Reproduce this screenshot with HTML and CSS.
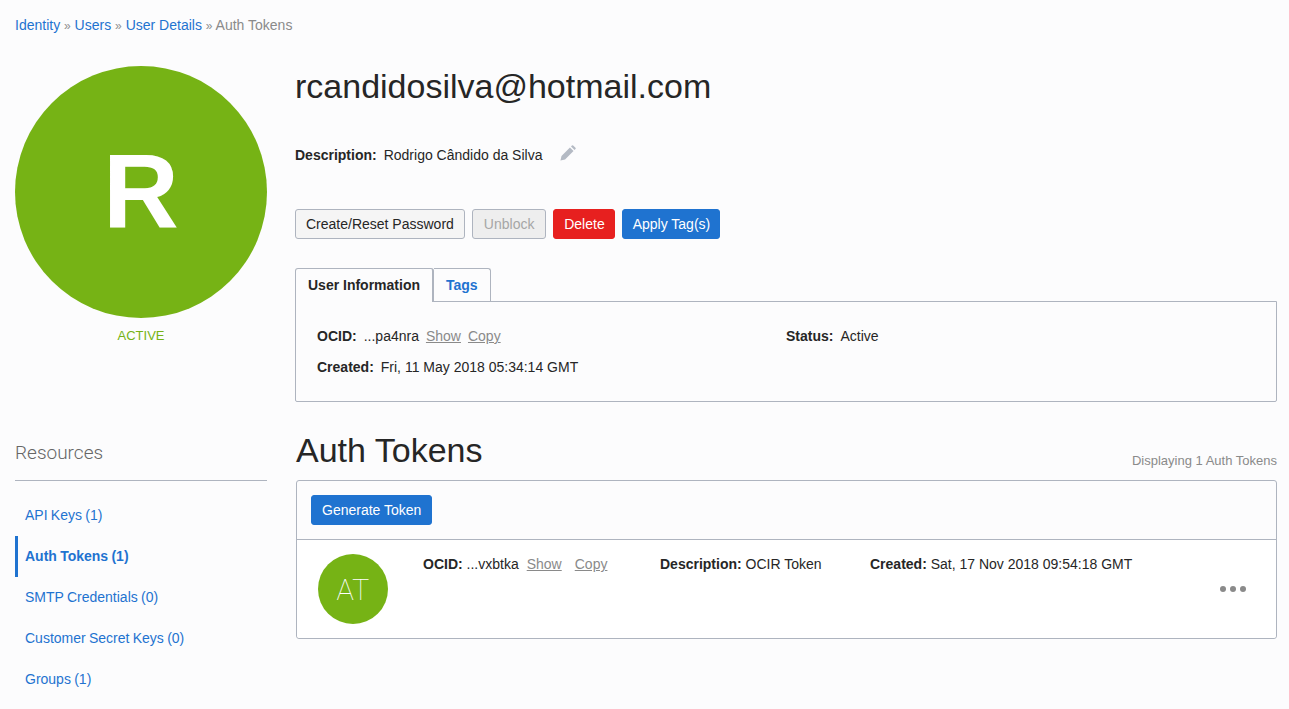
FILE: index.html
```html
<!DOCTYPE html>
<html lang="en">
<head>
<meta charset="utf-8">
<title>Auth Tokens</title>
<link rel="stylesheet" href="styles.css">
</head>
<body>
<nav class="crumbs"><a href="#">Identity</a> <span class="sep">»</span> <a href="#">Users</a> <span class="sep">»</span> <a href="#">User Details</a> <span class="sep">»</span> <span class="cur">Auth Tokens</span></nav>
<div class="top">
  <div class="identity">
    <div class="avatar">R</div>
    <div class="state">ACTIVE</div>
  </div>
  <div class="details">
    <h1>rcandidosilva@hotmail.com</h1>
    <div class="desc"><b>Description:</b><span>Rodrigo Cândido da Silva</span>
      <svg class="pencil" width="16" height="16" viewBox="0 0 18 18"><path d="M0.5 17.5l1.2-5.2L11.2 2.8l4 4L5.7 16.3z M12.4 1.6l1-1a1 1 0 0 1 1.4 0l2.6 2.6a1 1 0 0 1 0 1.4l-1 1z" fill="#b4bac4"/></svg>
    </div>
    <div class="actions">
      <button class="btn">Create/Reset Password</button>
      <button class="btn off">Unblock</button>
      <button class="btn red">Delete</button>
      <button class="btn blue tight">Apply Tag(s)</button>
    </div>
    <div class="tabs"><div class="tab on">User Information</div><div class="tab">Tags</div></div>
    <div class="info">
      <div class="info-row"><div class="info-col"><b>OCID:</b><span>...pa4nra</span><a class="lnk">Show</a><a class="lnk">Copy</a></div><div class="info-col"><b>Status:</b><span>Active</span></div></div>
      <div class="info-row"><div class="info-col"><b>Created:</b><span>Fri, 11 May 2018 05:34:14 GMT</span></div></div>
    </div>
  </div>
</div>
<div class="bottom">
  <aside class="side">
    <h3>Resources</h3>
    <ul>
      <li><a href="#">API Keys (1)</a></li>
      <li class="sel"><a href="#">Auth Tokens (1)</a></li>
      <li><a href="#">SMTP Credentials (0)</a></li>
      <li><a href="#">Customer Secret Keys (0)</a></li>
      <li><a href="#">Groups (1)</a></li>
    </ul>
  </aside>
  <section class="tokens">
    <div class="tokens-head"><h2>Auth Tokens</h2><span class="count">Displaying 1 Auth Tokens</span></div>
    <div class="panel">
      <div class="toolbar"><button class="btn blue">Generate Token</button></div>
      <div class="row">
        <div class="mini">AT</div>
        <div class="cell c1"><b>OCID:</b> ...vxbtka<a class="lnk l1">Show</a><a class="lnk l2">Copy</a></div>
        <div class="cell c2"><b>Description:</b> OCIR Token</div>
        <div class="cell c3"><b>Created:</b> Sat, 17 Nov 2018 09:54:18 GMT</div>
        <div class="dots"><i></i><i></i><i></i></div>
      </div>
    </div>
  </section>
</div>
</body>
</html>
```
FILE: styles.css
```css
* { box-sizing: border-box; }
html, body { margin: 0; height: 709px; overflow: hidden; }
body { background: #fcfcfd; color: #262626; font: 14px/20px "Liberation Sans", Arial, sans-serif; padding: 15px 12px 0 15px; }
a { color: #1f73d0; text-decoration: none; }
b { font-weight: 700; }
.crumbs { height: 20px; white-space: nowrap; }
.sep { color: #8f8f8f; font-size: 12px; }
.cur { color: #8a8a8a; }
.top { display: flex; gap: 28px; margin-top: 31px; }
.identity { width: 252px; flex: none; }
.avatar { width: 252px; height: 252px; border-radius: 50%; background: #76b315; color: #fff; font-size: 105px; font-weight: 700; display: flex; align-items: center; justify-content: center; }
.state { color: #76b315; text-align: center; margin-top: 8px; font-size: 13px; }
.details { flex: 1; min-width: 0; }
h1 { font-weight: 400; font-size: 34px; line-height: 40px; margin: 0; height: 40px; }
.desc { display: flex; align-items: center; margin-top: 39px; height: 20px; }
.desc span { margin-left: 7px; }
.pencil { margin: -4px 0 0 18px; }
.actions { display: flex; gap: 7px; margin-top: 44px; }
.btn { font: 14px/20px "Liberation Sans", Arial, sans-serif; height: 30px; padding: 0 10px; border: 1px solid #aeb4bf; border-radius: 3px; background: #f5f5f5; color: #262626; }
.off { background: #eeeeee; color: #a6a6a6; padding: 0 11px; }
.red { background: #e7201f; border-color: #e7201f; color: #fff; width: 62px; padding: 0; }
.blue { background: #1f73d0; border-color: #1f73d0; color: #fff; }
.tight { width: 98px; padding: 0; }
.tabs { display: flex; margin-top: 29px; height: 34px; position: relative; z-index: 1; }
.tab { font-weight: 700; color: #1f73d0; padding: 6px 12px 0; height: 33px; border: 1px solid #aeb4bf; border-bottom: 0; border-left: 0; border-radius: 0 3px 0 0; }
.tab.on { color: #262626; background: #fcfcfd; height: 34px; border-left: 1px solid #aeb4bf; border-radius: 3px 3px 0 0; border-right-width: 2px; }
.info { border: 1px solid #aeb4bf; height: 101px; margin-top: -1px; padding: 24px 21px 0; border-radius: 0 0 2px 2px; }
.info-row { display: flex; height: 20px; margin-bottom: 11px; }
.info-col { width: 469px; display: flex; }
.info-col span { margin-left: 7px; }
.lnk { color: #8a8a8a; text-decoration: underline; margin-left: 7px; }
.bottom { display: flex; gap: 28px; margin-top: 29px; }
.side { width: 252px; flex: none; }
.side h3 { font: 300 19px/22px Roboto, "Liberation Sans", sans-serif; color: #666666; margin: 11px 0 0; padding-bottom: 16px; border-bottom: 1px solid #aeb4bf; }
.side ul { list-style: none; margin: 14px 0 0; padding: 0; word-spacing: -0.6px; }
.side li { height: 41px; line-height: 41px; padding-left: 10px; }
.sel { border-left: 3px solid #1f73d0; padding-left: 7px !important; font-weight: 700; }
.tokens { flex: 1; min-width: 0; padding-left: 1px; }
.tokens-head { display: flex; justify-content: space-between; align-items: flex-end; height: 49px; }
h2 { font-weight: 400; font-size: 34px; line-height: 40px; margin: 0 0 10px 0; }
.count { font-size: 13px; color: #8a8a8a; margin-bottom: 9px; }
.panel { border: 1px solid #aeb4bf; border-radius: 3px; height: 159px; }
.toolbar { height: 59px; padding: 14px; border-bottom: 1px solid #aeb4bf; }
.row { position: relative; display: flex; height: 98px; background: #fff; border-radius: 0 0 3px 3px; }
.mini { width: 70px; height: 70px; border-radius: 50%; background: #76b315; color: #fff; font: 100 29px/72px Roboto, sans-serif; text-align: center; margin: 14px 0 0 21px; flex: none; }
.cell { margin-top: 14px; white-space: nowrap; }
.c1 { margin-left: 35px; width: 237px; }
.l1 { margin-left: 8px; }
.l2 { margin-left: 13px; }
.c2 { width: 210px; }
.dots { position: absolute; right: 30px; top: 46px; display: flex; gap: 4px; }
.dots i { width: 6px; height: 6px; border-radius: 50%; background: #8a8a8a; }
```
